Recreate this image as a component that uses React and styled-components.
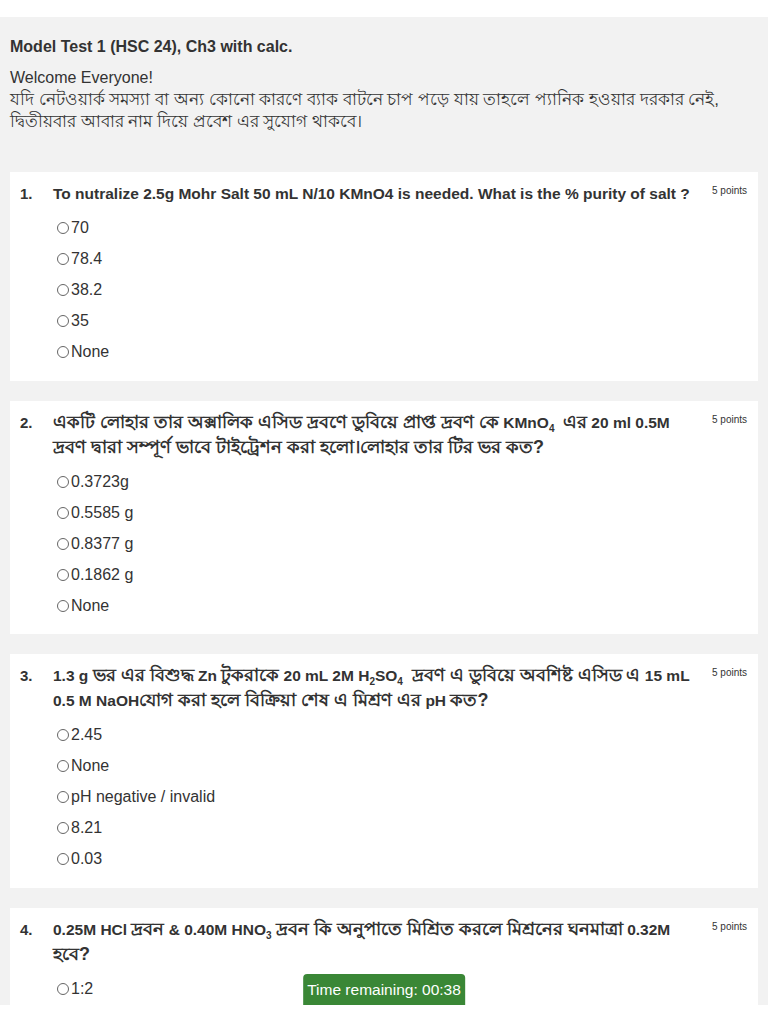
import React from 'react'
import styled, { createGlobalStyle } from 'styled-components'

const GlobalStyle = createGlobalStyle`
    body {
        margin: 0;
        background: #ffffff;
        font-family: "Liberation Sans", Arial, sans-serif;
        color: #333333;
    }
`

const Screen = styled.div`
    padding-top: 17px;
    height: 1024px;
    box-sizing: border-box;
`

const Page = styled.div`
    position: relative;
    height: 988px;
    overflow: hidden;
    background: #f2f2f2;
    padding: 0 10px;
    box-sizing: border-box;
`

const Header = styled.div`
    padding: 20px 0 39px;
`

const Title = styled.h1`
    margin: 0 0 10px;
    font-size: 16px;
    font-weight: bold;
    line-height: 20px;
    color: #333;
`

const Intro = styled.p`
    margin: 0;
    font-size: 16px;
    line-height: 22px;
    color: #333;
`

// bengali runs render a bit smaller than the latin text around them
const Bn = styled.span`
    font-size: ${(p) => p.$scale || 1.16}em;
    line-height: 0;
`

const Card = styled.div`
    background: #ffffff;
    padding: 9px 10px 13px;
    margin-bottom: 20px;
`

const QuestionRow = styled.div`
    display: flex;
    align-items: flex-start;
`

const Number = styled.span`
    width: 33px;
    flex-shrink: 0;
    font-size: 15px;
    font-weight: bold;
    line-height: 25px;
`

const QuestionText = styled.div`
    flex: 1;
    font-size: 15.5px;
    font-weight: bold;
    line-height: 25px;
    padding-right: 14px;

    sub {
        font-size: 10px;
        line-height: 0;
    }
`

const Points = styled.span`
    width: 36px;
    flex-shrink: 0;
    font-size: 10px;
    line-height: 20px;
    white-space: nowrap;
`

const Options = styled.div`
    margin-top: 6.5px;
    padding-left: 37px;
`

const Option = styled.label`
    display: flex;
    align-items: center;
    height: 31px;
    font-size: 16px;
    color: #333;
`

const Radio = styled.span`
    width: 12px;
    height: 12px;
    border: 1px solid #666;
    border-radius: 50%;
    box-sizing: border-box;
    margin-right: 2px;
    flex-shrink: 0;
`

const Timer = styled.div`
    position: absolute;
    left: 50%;
    bottom: 0;
    transform: translateX(-50%);
    background: #3a8736;
    color: #ffffff;
    font-size: 15.5px;
    line-height: 21px;
    padding: 5px 4px;
    border-radius: 4px 4px 0 0;
    white-space: nowrap;
`

const questions = [
    {
        text: <>To nutralize 2.5g Mohr Salt 50 mL N/10 KMnO4 is needed. What is the % purity of salt ?</>,
        options: ['70', '78.4', '38.2', '35', 'None'],
    },
    {
        text: (
            <>
                <Bn>একটি লোহার তার অক্সালিক এসিড দ্রবণে ডুবিয়ে প্রাপ্ত দ্রবণ কে</Bn> KMnO<sub>4</sub>&nbsp; <Bn>এর</Bn> 20 ml 0.5M{' '}
                <Bn>দ্রবণ দ্বারা সম্পূর্ণ ভাবে টাইট্রেশন করা হলো।লোহার তার টির ভর কত?</Bn>
            </>
        ),
        options: ['0.3723g', '0.5585 g', '0.8377 g', '0.1862 g', 'None'],
    },
    {
        text: (
            <>
                1.3 g <Bn>ভর এর বিশুদ্ধ</Bn> Zn <Bn>টুকরাকে</Bn> 20 mL 2M H<sub>2</sub>SO<sub>4</sub>&nbsp; <Bn>দ্রবণ এ ডুবিয়ে অবশিষ্ট এসিড এ</Bn> 15 mL 0.5 M NaOH<Bn>যোগ করা হলে বিক্রিয়া শেষ এ মিশ্রণ এর</Bn> pH <Bn>কত?</Bn>
            </>
        ),
        options: ['2.45', 'None', 'pH negative / invalid', '8.21', '0.03'],
    },
    {
        text: (
            <>
                0.25M HCl <Bn>দ্রবন</Bn> &amp; 0.40M HNO<sub>3</sub> <Bn>দ্রবন কি অনুপাতে মিশ্রিত করলে মিশ্রনের ঘনমাত্রা</Bn> 0.32M <Bn>হবে?</Bn>
            </>
        ),
        options: ['1:2', '2:1', '8:7'],
    },
]

const App = () => {
    return (
        <Screen>
            <GlobalStyle />
            <Page>
                <Header>
                    <Title>Model Test 1 (HSC 24), Ch3 with calc.</Title>
                    <Intro>
                        Welcome Everyone!<br />
                        <Bn $scale={1.06}>
                            যদি নেটওয়ার্ক সমস্যা বা অন্য কোনো কারণে ব্যাক বাটনে চাপ পড়ে যায় তাহলে প্যানিক হওয়ার দরকার নেই, দ্বিতীয়বার আবার নাম দিয়ে প্রবেশ এর সুযোগ থাকবে।
                        </Bn>
                    </Intro>
                </Header>

                {questions.map((q, i) => (
                    <Card key={i}>
                        <QuestionRow>
                            <Number>{i + 1}.</Number>
                            <QuestionText>{q.text}</QuestionText>
                            <Points>5 points</Points>
                        </QuestionRow>
                        <Options>
                            {q.options.map((o) => (
                                <Option key={o}>
                                    <Radio />
                                    {o}
                                </Option>
                            ))}
                        </Options>
                    </Card>
                ))}

                <Timer>Time remaining: 00:38</Timer>
            </Page>
        </Screen>
    )
}

export default App
